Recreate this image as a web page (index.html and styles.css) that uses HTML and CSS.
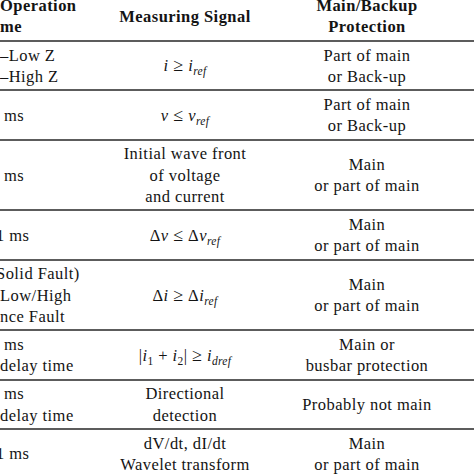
FILE: index.html
```html
<!DOCTYPE html>
<html>
<head>
<meta charset="utf-8">
<link rel="stylesheet" href="styles.css">
</head>
<body>
<table class="tbl">
  <colgroup><col class="c1"><col class="c2"><col class="c3"></colgroup>
  <thead>
    <tr class="head">
      <th class="left">Operation<br><span class="cut-me">me</span></th>
      <th>Measuring Signal</th>
      <th>Main/Backup<br>Protection</th>
    </tr>
  </thead>
  <tbody>
    <tr>
      <td class="left">–Low Z<br>–High Z</td>
      <td><span class="m">i</span> <span class="op">≥</span> <span class="m">i</span><sub class="m">ref</sub></td>
      <td>Part of main<br>or Back-up</td>
    </tr>
    <tr>
      <td class="left"><span class="ind">ms</span></td>
      <td><span class="m">v</span> <span class="op">≤</span> <span class="m">v</span><sub class="m">ref</sub></td>
      <td>Part of main<br>or Back-up</td>
    </tr>
    <tr>
      <td class="left"><span class="ind">ms</span></td>
      <td>Initial wave front<br>of voltage<br>and current</td>
      <td>Main<br>or part of main</td>
    </tr>
    <tr>
      <td class="left"><span class="cut1">1 ms</span></td>
      <td>Δ<span class="m">v</span> <span class="op">≤</span> Δ<span class="m">v</span><sub class="m">ref</sub></td>
      <td>Main<br>or part of main</td>
    </tr>
    <tr>
      <td class="left"><span class="cutS">Solid Fault)</span><br>Low/High<br>nce Fault</td>
      <td>Δ<span class="m">i</span> <span class="op">≥</span> Δ<span class="m">i</span><sub class="m">ref</sub></td>
      <td>Main<br>or part of main</td>
    </tr>
    <tr>
      <td class="left"><span class="ind">ms</span><br>delay time</td>
      <td>|<span class="m">i</span><sub>1</sub> + <span class="m">i</span><sub>2</sub>| <span class="op">≥</span> <span class="m">i</span><sub class="m">dref</sub></td>
      <td>Main or<br>busbar protection</td>
    </tr>
    <tr>
      <td class="left"><span class="ind">ms</span><br>delay time</td>
      <td>Directional<br>detection</td>
      <td>Probably not main</td>
    </tr>
    <tr>
      <td class="left"><span class="cut1">1 ms</span></td>
      <td>dV/dt, dI/dt<br>Wavelet transform</td>
      <td>Main<br>or part of main</td>
    </tr>
  </tbody>
</table>
</body>
</html>
```
FILE: styles.css
```css
html, body {
  margin: 0;
  padding: 0;
  background: #ffffff;
  overflow: hidden;
}
body {
  width: 474px;
  height: 474px;
}
.tbl {
  margin-top: -7.4px;
  width: 474px;
  border-collapse: collapse;
  table-layout: fixed;
  font-family: "Liberation Serif", "Times New Roman", serif;
  font-size: 16.5px;
  letter-spacing: 0.45px;
  line-height: 21.2px;
  color: #141414;
}
.c1 { width: 110px; }
.c2 { width: 150px; }
.c3 { width: 214px; }
.tbl th, .tbl td {
  padding: 2.5px 0;
  text-align: center;
  vertical-align: middle;
  white-space: nowrap;
  overflow: visible;
  border-bottom: 2px solid #5c5c5c;
}
.tbl th {
  font-weight: bold;
}
.tbl .left {
  text-align: left;
}
.m {
  font-style: italic;
}
.op {
  font-size: 18px;
}
sub {
  font-size: 11.5px;
  line-height: 0;
  vertical-align: -4px;
  letter-spacing: 0.3px;
}
.ind {
  margin-left: 4px;
}
.cut1 {
  margin-left: -4px;
}
.cutS {
  margin-left: -4px;
}
.cut-me {
  margin-left: 0;
}
```
